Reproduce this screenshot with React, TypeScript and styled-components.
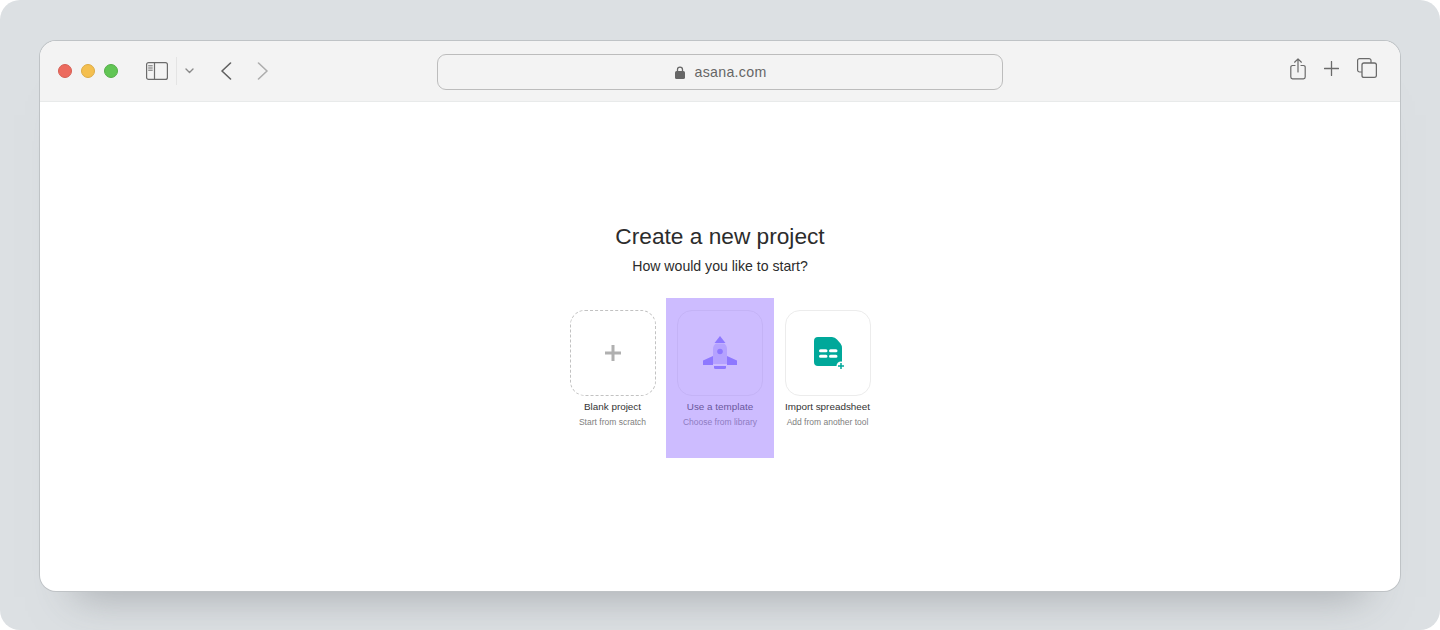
import React from "react";
import styled, { createGlobalStyle } from "styled-components";

const Global = createGlobalStyle`
  html, body { margin: 0; padding: 0; background: #fff; }
  body { font-family: "Liberation Sans", Arial, sans-serif; }
`;

const Backdrop = styled.div`
  width: 1440px;
  height: 630px;
  box-sizing: border-box;
  padding: 41px 40px 39px;
  background: #dce0e3;
  border-radius: 20px;
  overflow: hidden;
`;

const Window = styled.div`
  height: 100%;
  display: flex;
  flex-direction: column;
  background: #fff;
  border-radius: 16px;
  overflow: hidden;
  box-shadow: 0 0 0 1px #bfc3c6, 0 40px 40px -34px rgba(125, 130, 135, 0.55);
`;

const Toolbar = styled.header`
  height: 61px;
  flex: none;
  box-sizing: border-box;
  display: grid;
  grid-template-columns: 1fr 566px 1fr;
  align-items: center;
  background: #f3f3f3;
  border-bottom: 1px solid #e8eaea;
`;

const LeftTools = styled.div`
  display: flex;
  align-items: center;
  padding-left: 18px;
  height: 100%;
`;

const Light = styled.span<{ $color: string; $edge: string }>`
  width: 14px;
  height: 14px;
  box-sizing: border-box;
  border-radius: 50%;
  background: ${(p) => p.$color};
  border: 1px solid ${(p) => p.$edge};
  margin-right: 9px;
`;

const Glyph = styled.svg<{ $ml?: number }>`
  display: block;
  flex: none;
  margin-left: ${(p) => p.$ml ?? 0}px;
  fill: none;
  stroke-linecap: round;
  stroke-linejoin: round;
`;

const Divider = styled.span`
  width: 1px;
  height: 28px;
  margin-left: 8px;
  background: #e4e4e4;
`;

const AddressBar = styled.div`
  height: 36px;
  margin-top: 2px;
  box-sizing: border-box;
  display: flex;
  align-items: center;
  justify-content: center;
  gap: 9px;
  padding-left: 2px;
  border: 1px solid #bcbcbc;
  border-radius: 9px;
  background: #f3f3f3;
  color: #666;
  font-size: 14.2px;
  letter-spacing: 0.3px;
`;

const RightTools = styled.div`
  display: flex;
  align-items: center;
  justify-content: flex-end;
  padding-right: 23px;
  padding-bottom: 5px;
`;

const Content = styled.main`
  flex: 1;
  display: flex;
  flex-direction: column;
  align-items: center;
  padding-top: 121px;
  color: #2c2c2c;
`;

const Title = styled.h1`
  margin: 0;
  font-size: 22.7px;
  line-height: 27px;
  font-weight: 400;
`;

const Subtitle = styled.p`
  margin: 6px 0 0;
  font-size: 14.1px;
  line-height: 20px;
`;

const Options = styled.div`
  display: flex;
  margin-top: 22px;
`;

const Option = styled.div<{ $active?: boolean }>`
  position: relative;
  width: 107.5px;
  height: 160px;
  box-sizing: border-box;
  padding-top: 12px;
  display: flex;
  flex-direction: column;
  align-items: center;
  ${(p) =>
    p.$active &&
    `&::after {
      content: "";
      position: absolute;
      inset: 0;
      background: rgba(155, 121, 255, 0.5);
    }`}
`;

const Tile = styled.div<{ $dashed?: boolean }>`
  width: 86px;
  height: 86px;
  box-sizing: border-box;
  display: flex;
  align-items: center;
  justify-content: center;
  border-radius: 15px;
  border: 1px ${(p) => (p.$dashed ? "dashed #c2c2c2" : "solid #ececec")};
  background: #fff;
`;

const OptionTitle = styled.div`
  margin-top: 4px;
  font-size: 9.9px;
  line-height: 14px;
  white-space: nowrap;
  color: #333;
`;

const OptionHint = styled.div`
  margin-top: 2px;
  font-size: 8.5px;
  line-height: 12px;
  white-space: nowrap;
  color: #808080;
`;

const Bold = styled.path`
  stroke: #b0b0b0;
  stroke-width: 3;
  stroke-linecap: butt;
`;

export default function App() {
  return (
    <>
      <Global />
      <Backdrop>
        <Window>
          <Toolbar>
            <LeftTools>
              <Light $color="#ec6a5e" $edge="#d65e53" />
              <Light $color="#f4bf4f" $edge="#dcab45" />
              <Light $color="#61c554" $edge="#55ae49" />
              <Glyph $ml={19} width="22" height="18" viewBox="0 0 22 18" stroke="#6b6b6b">
                <rect x="0.6" y="0.6" width="20.8" height="16.8" rx="2" strokeWidth="1.2" />
                <path d="M8.5 .6V17.4" strokeWidth="1.2" />
                <path d="M2.6 3.8H6.3M2.6 6H6.3M2.6 8.2H6.3" strokeWidth="1" />
              </Glyph>
              <Divider />
              <Glyph $ml={8} width="9" height="6" viewBox="0 0 9 6" stroke="#8a8a8a">
                <path d="M1 1L4.5 4.5L8 1" strokeWidth="1.4" />
              </Glyph>
              <Glyph $ml={26} width="12" height="18" viewBox="0 0 12 18" stroke="#606060">
                <path d="M10.5 1L2 9L10.5 17" strokeWidth="1.6" />
              </Glyph>
              <Glyph $ml={25} width="12" height="18" viewBox="0 0 12 18" stroke="#adadad">
                <path d="M1.5 1L10 9L1.5 17" strokeWidth="1.6" />
              </Glyph>
            </LeftTools>
            <AddressBar>
              <svg width="10" height="13" viewBox="0 0 10 13" style={{ display: "block" }}>
                <path d="M2.5 6V3.6a2.5 2.5 0 0 1 5 0V6" fill="none" stroke="#666" strokeWidth="1.3" />
                <rect x="0" y="5" width="10" height="8" rx="1.6" fill="#666" />
              </svg>
              <span>asana.com</span>
            </AddressBar>
            <RightTools>
              <Glyph width="16" height="22" viewBox="0 0 16 22" stroke="#6a6a6a">
                <path d="M5 7.5H2.5a1.7 1.7 0 0 0-1.7 1.7v9.9a1.7 1.7 0 0 0 1.7 1.7h11a1.7 1.7 0 0 0 1.7-1.7V9.2a1.7 1.7 0 0 0-1.7-1.7H11" strokeWidth="1.2" />
                <path d="M8 14V1M4.6 4.2L8 .9l3.4 3.3" strokeWidth="1.2" />
              </Glyph>
              <Glyph $ml={18} width="15" height="15" viewBox="0 0 15 15" stroke="#6a6a6a">
                <path d="M7.5 .5V14.500M.5 7.5H14.500" strokeWidth="1.3" />
              </Glyph>
              <Glyph $ml={18} width="20" height="22" viewBox="0 0 20 22" stroke="#6a6a6a">
                <path d="M4.500 14H2.600A2 2 0 0 1 .6 12V2.600A2 2 0 0 1 2.600 .6H12a2 2 0 0 1 2 2V4.500" strokeWidth="1.2" />
                <rect x="5" y="5" width="14.400" height="14.400" rx="2" strokeWidth="1.3" />
              </Glyph>
            </RightTools>
          </Toolbar>
          <Content>
            <Title>Create a new project</Title>
            <Subtitle>How would you like to start?</Subtitle>
            <Options>
              <Option>
                <Tile $dashed>
                  <svg width="18" height="18" viewBox="0 0 18 18">
                    <Bold d="M9 1V17M1 9H17" />
                  </svg>
                </Tile>
                <OptionTitle>Blank project</OptionTitle>
                <OptionHint>Start from scratch</OptionHint>
              </Option>
              <Option $active>
                <Tile>
                  <svg width="36" height="34" viewBox="0 0 36 34">
                    <path d="M18 0L23.500 7H12.500Z" fill="#8177ff" />
                    <path d="M14 7.500H22Q25 9 25 13V28H11V13Q11 9 14 7.500Z" fill="#cfcbff" />
                    <circle cx="18" cy="15.500" r="2.800" fill="#8177ff" />
                    <path d="M11 20V29H1V24.500Z M25 20V29H35V24.500Z" fill="#8177ff" />
                    <path d="M12 30H24V31.500A1.500 1.500 0 0 1 22.500 33H13.500A1.500 1.500 0 0 1 12 31.500Z" fill="#8177ff" />
                  </svg>
                </Tile>
                <OptionTitle>Use a template</OptionTitle>
                <OptionHint>Choose from library</OptionHint>
              </Option>
              <Option>
                <Tile>
                  <svg width="36" height="36" viewBox="0 0 36 36">
                    <path d="M8 2H22Q25 2 27 4.500L30.500 8.500Q32 10.500 32 13V27A4 4 0 0 1 28 31H8A4 4 0 0 1 4 27V6A4 4 0 0 1 8 2Z" fill="#00a89a" />
                    <path d="M10.500 15.800H16M20.500 15.800H26M10.500 21.200H16M20.500 21.200H26" stroke="#fff" strokeWidth="3" strokeLinecap="round" />
                    <circle cx="31" cy="31" r="4.500" fill="#fff" />
                    <path d="M31 28V34M28 31H34" stroke="#00a89a" strokeWidth="1.500" />
                  </svg>
                </Tile>
                <OptionTitle>Import spreadsheet</OptionTitle>
                <OptionHint>Add from another tool</OptionHint>
              </Option>
            </Options>
          </Content>
        </Window>
      </Backdrop>
    </>
  );
}
